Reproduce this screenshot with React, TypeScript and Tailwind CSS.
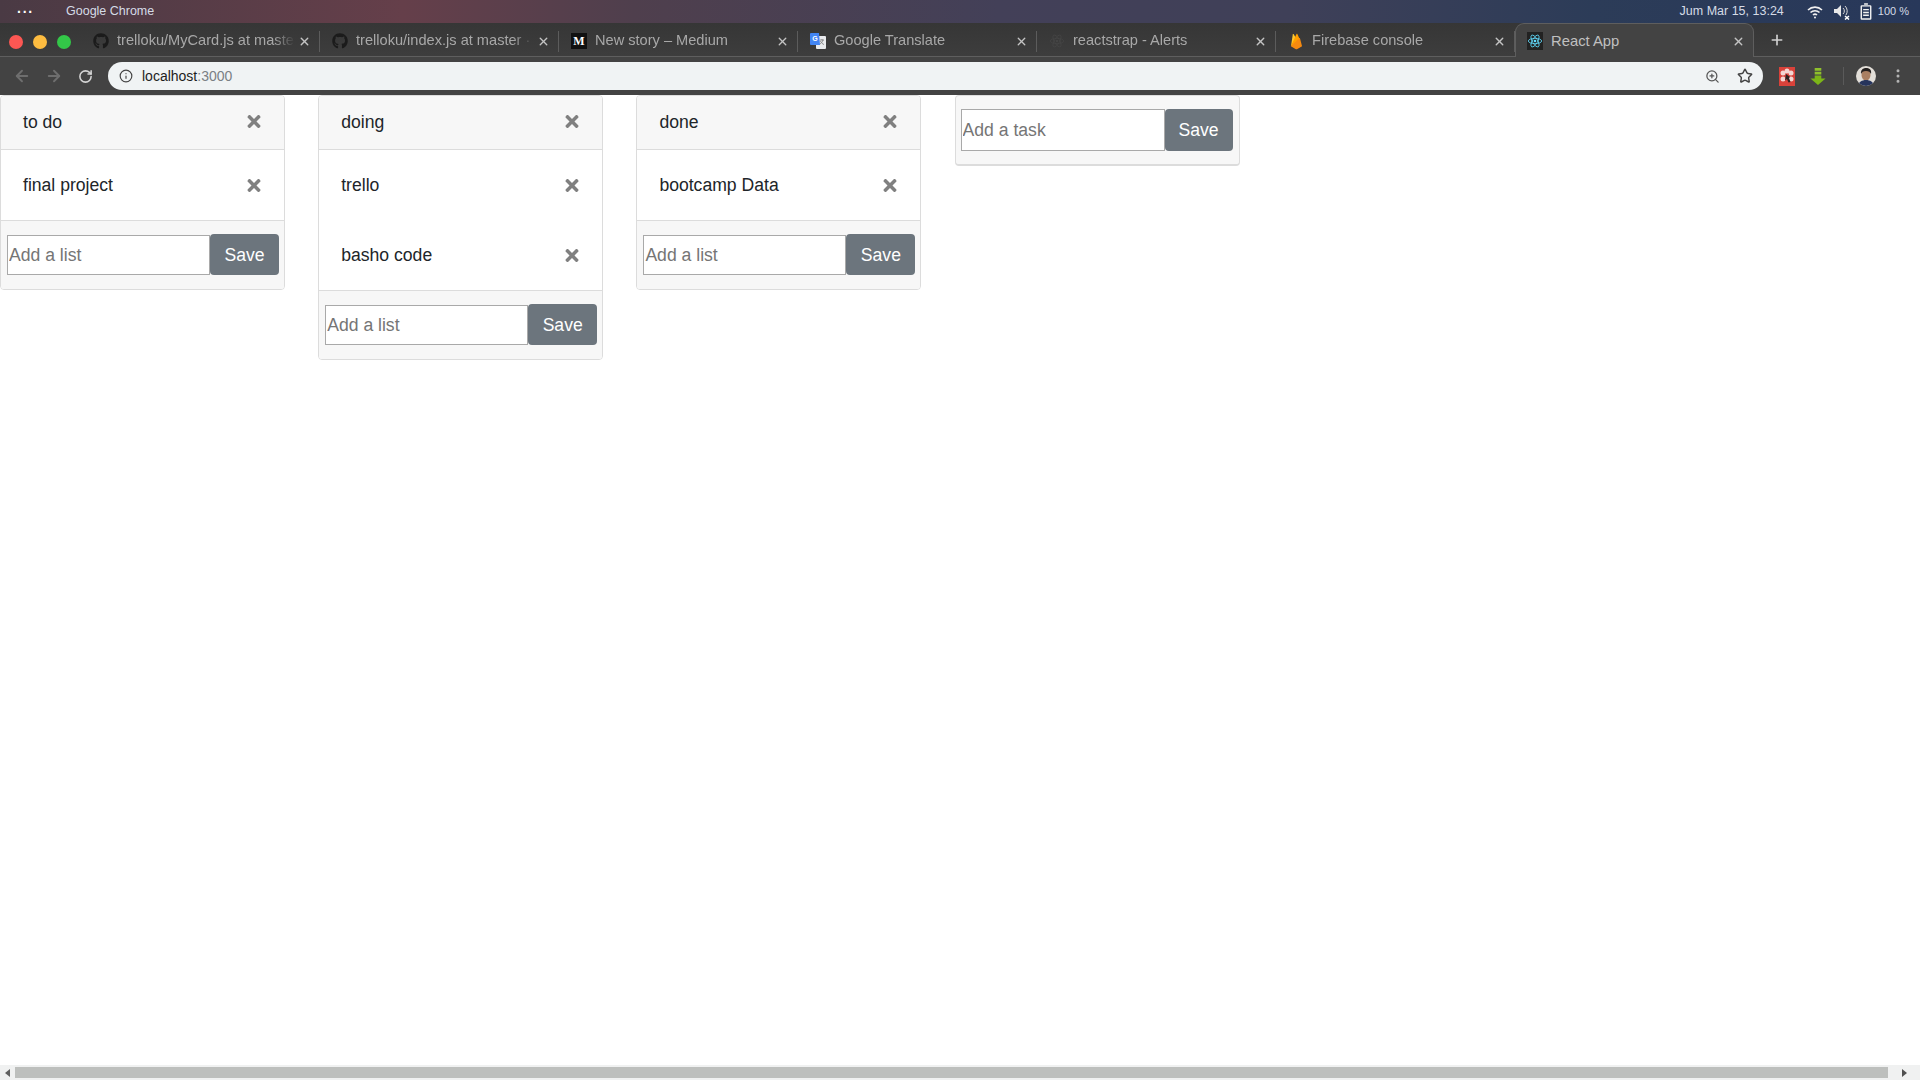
import { ArrowLeft, ArrowRight, Info, MoreVertical, Plus, RotateCw, Star, X, ZoomIn } from 'lucide-react';
import { FaGithub, FaTimes } from 'react-icons/fa';

function ReactLogo({ className }: { className: string }) {
  return (
    <svg viewBox="0 0 24 24" fill="none" stroke="currentColor" strokeWidth="1.2" className={className}>
      <circle cx="12" cy="12" r="2" fill="currentColor" stroke="none" />
      <ellipse cx="12" cy="12" rx="10" ry="4" />
      <ellipse cx="12" cy="12" rx="10" ry="4" transform="rotate(60 12 12)" />
      <ellipse cx="12" cy="12" rx="10" ry="4" transform="rotate(120 12 12)" />
    </svg>
  );
}

function MediumIcon() {
  return (
    <span className="flex h-4 w-4 items-center justify-center bg-[#111] font-['Liberation_Serif',serif] text-[12px] font-bold leading-none text-white">
      M
    </span>
  );
}

function TranslateIcon() {
  return (
    <svg viewBox="0 0 16 16" className="h-4 w-4">
      <rect x="6" y="3" width="10" height="13" rx="1" fill="#e8eaed" />
      <path d="M10 7h4M12 6v1M13 7c-.5 2-2 3.5-3 4M10.500 8c.5 1.500 2 3 3.500 3.500" stroke="#777" strokeWidth="0.8" fill="none" />
      <path d="M1 0h8l1 12H1a1 1 0 0 1-1-1V1a1 1 0 0 1 1-1z" fill="#4285f4" />
      <text x="2.200" y="8" fontSize="7" fontWeight="700" fill="#fff" fontFamily="Liberation Sans, sans-serif">G</text>
    </svg>
  );
}

function FirebaseIcon() {
  return (
    <svg viewBox="0 0 14 18" className="h-[17px] w-[13px]">
      <path d="M1 14 3 1.500c.1-.5.7-.6 1-.2l2.500 4.200z" fill="#ffc62b" />
      <path d="M1 14 7 1c.2-.4.7-.4.9 0L10 5.500l1 5z" fill="#ffa000" />
      <path d="M1 14 9.800 5.500c.3-.3.8-.2 1 .2L13 14l-5.500 3.300a1.500 1.500 0 0 1-1.200 0z" fill="#f68a10" />
    </svg>
  );
}

function RedExtension() {
  return (
    <svg viewBox="0 0 16 19" className="h-[19px] w-[16px]">
      <rect width="16" height="19" fill="#d9423a" />
      <g fill="#f3d6d2">
        <circle cx="4" cy="6" r="2.500" />
        <circle cx="8" cy="4" r="2.500" />
        <circle cx="12" cy="6" r="2.500" />
        <circle cx="4" cy="12" r="2.500" />
        <circle cx="12" cy="12" r="2.500" />
      </g>
      <path d="M7 7l4 3-1 1 1.500 4-2 .5L8 12l-2 1.500z" fill="#2a2322" />
    </svg>
  );
}

function Avatar() {
  return (
    <svg viewBox="0 0 20 20" className="h-[20px] w-[20px] rounded-full">
      <rect width="20" height="20" fill="#e2ded8" />
      <ellipse cx="10" cy="9" rx="4.500" ry="5.500" fill="#a97f62" />
      <path d="M5 8c-.5-4 2-6 5-6s6 1.500 5 6c-1-2-2-3-5-3S6 6 5 8z" fill="#231f1e" />
      <path d="M2 20c.5-4 4-6 8-6s7.500 2 8 6z" fill="#26345c" />
    </svg>
  );
}

const tabs = [
  { title: 'trelloku/MyCard.js at maste', icon: <FaGithub className="h-4 w-4 text-[#1b1b1b]" /> },
  { title: 'trelloku/index.js at master ·', icon: <FaGithub className="h-4 w-4 text-[#1b1b1b]" /> },
  { title: 'New story – Medium', icon: <MediumIcon /> },
  { title: 'Google Translate', icon: <TranslateIcon /> },
  { title: 'reactstrap - Alerts', icon: <ReactLogo className="h-4 w-4 text-[#444]" /> },
  { title: 'Firebase console', icon: <FirebaseIcon /> },
];

function Tab({ title, icon }: { title: string; icon: React.ReactNode }) {
  return (
    <div className="flex h-full w-[239px] shrink-0 items-center pl-[12px] pt-[3px]">
      <div className="flex w-4 shrink-0 justify-center">{icon}</div>
      <span className="ml-[8px] min-w-0 flex-1 overflow-hidden whitespace-nowrap text-[14.600px] text-[#a8a8a8] [mask-image:linear-gradient(to_right,black_88%,transparent)]">
        {title}
      </span>
      <X className="ml-[3px] h-[13px] w-[13px] shrink-0 text-[#c4c4c4]" strokeWidth={2.5} />
      <div className="ml-[8px] h-[21px] w-px shrink-0 bg-[#5c5c5c]" />
    </div>
  );
}

function TopBar() {
  return (
    <div className="flex h-[23px] shrink-0 items-center bg-[linear-gradient(to_right,#4a3a44,#653f4a_21%,#4f3f4d_33%,#434058_52%,#3f4058_67%,#2c3c58_83%,#28385a)] text-[12.500px] text-[#d5dbe6]">
      <span className="ml-[17px] w-[49px] text-[14px] font-bold leading-none tracking-[1px] text-white">···</span>
      <span>Google Chrome</span>
      <span className="ml-auto">Jum Mar 15, 13:24</span>
      <svg viewBox="0 0 16 14" className="ml-[23px] h-[14px] w-[16px]" fill="none" stroke="#f0f0f0" strokeWidth="1.600">
        <path d="M1 5a10 10 0 0 1 14 0M3.500 7.500a6.500 6.500 0 0 1 9 0M6 10a3 3 0 0 1 4 0" />
        <circle cx="8" cy="12.500" r="1" fill="#f0f0f0" stroke="none" />
      </svg>
      <svg viewBox="0 0 18 16" className="ml-[10px] h-[16px] w-[18px]" fill="none" stroke="#d8d8d8" strokeWidth="1">
        <path d="M1 5h3l4-4v12l-4-4H1z" fill="#e8e8e8" stroke="none" />
        <path d="M10 4a4 4 0 0 1 0 6M12 2a7 7 0 0 1 1 9" />
        <path d="M12 12l4 3.500M16 12l-4 3.500" stroke="#fff" strokeWidth="1.500" />
      </svg>
      <svg viewBox="0 0 12 18" className="ml-[9px] h-[17px] w-[12px]" fill="none" stroke="#f0f0f0" strokeWidth="1.500">
        <rect x="1" y="3" width="10" height="14" rx="0.500" />
        <path d="M4 1h4M3 7h6M3 10h6M3 13h6" />
      </svg>
      <span className="ml-[6px] mr-[11px] text-[11px]">100 %</span>
    </div>
  );
}

function TabStrip() {
  return (
    <div className="flex h-[34px] shrink-0 items-stretch border-b border-[#5e5e5e] bg-[linear-gradient(#363636,#3d3d3d)]">
      <div className="flex w-[81px] shrink-0 items-center gap-[10px] pl-[9px] pt-[5px]">
        <span className="h-[14px] w-[14px] rounded-full bg-[#fc5753]" />
        <span className="h-[14px] w-[14px] rounded-full bg-[#fdbc40]" />
        <span className="h-[14px] w-[14px] rounded-full bg-[#33c748]" />
      </div>
      {tabs.map((t) => (
        <Tab key={t.title} title={t.title} icon={t.icon} />
      ))}
      <div className="-mb-px flex w-[239px] shrink-0 items-center rounded-t-[9px] border border-b-0 border-[#5e5e5e] bg-[#434343] pl-[11px] pr-[8px] pt-[1px]">
        <span className="flex h-[18px] w-[16px] items-center justify-center bg-[#222]">
          <ReactLogo className="h-4 w-4 text-[#61dafb]" />
        </span>
        <span className="ml-[8px] flex-1 text-[14.800px] text-[#c0c0c0]">React App</span>
        <X className="h-[13px] w-[13px] text-[#c4c4c4]" strokeWidth={2.5} />
      </div>
      <Plus className="ml-[15px] h-[16px] w-[16px] self-center text-[#d0d0d0]" strokeWidth={2.5} />
    </div>
  );
}

function Toolbar() {
  return (
    <div className="flex h-[38px] shrink-0 items-start bg-[#434343] pt-[5px]">
      <div className="flex h-[28px] w-[108px] items-center pl-[13px]">
        <ArrowLeft className="h-[18px] w-[18px] text-[#6e6e6e]" strokeWidth={2.5} />
        <ArrowRight className="ml-[14px] h-[18px] w-[18px] text-[#6e6e6e]" strokeWidth={2.5} />
        <RotateCw className="ml-[15px] h-[15px] w-[15px] text-[#d4d4d4]" strokeWidth={2.5} />
      </div>
      <div className="flex h-[28px] w-[1655px] shrink-0 items-center rounded-full bg-[#f0f3f4] pl-[11px] pr-[10px]">
        <Info className="h-[14px] w-[14px] text-[#444]" />
        <span className="ml-[9px] text-[14px] text-[#1d1d1d]">
          localhost<span className="text-[#7a7f84]">:3000</span>
        </span>
        <ZoomIn className="ml-auto h-[15px] w-[15px] text-[#555]" />
        <Star className="ml-[17px] h-[16px] w-[16px] text-[#444]" strokeWidth={2.2} />
      </div>
      <div className="flex h-[28px] items-center">
        <span className="ml-[16px] flex">
          <RedExtension />
        </span>
        <svg viewBox="0 0 16 18" className="ml-[15px] h-[17px] w-[16px]">
          <path d="M4.500 0h7v3h-7zM4.500 4h7v3h-7z" fill="#8fc02c" />
          <path d="M4.500 8h7v3H16l-8 7-8-7h4.500z" fill="#7cb518" />
        </svg>
        <div className="ml-[17px] h-[18px] w-px bg-[#5a5a5a]" />
        <span className="ml-[12px] flex">
          <Avatar />
        </span>
        <MoreVertical className="ml-[13px] h-[18px] w-[18px] text-[#b4b4b4]" />
      </div>
    </div>
  );
}

function AddForm({ placeholder, inputWidth, tall }: { placeholder: string; inputWidth: string; tall?: boolean }) {
  return (
    <div className="flex items-center">
      <input
        readOnly
        placeholder={placeholder}
        className={`${inputWidth} ${tall ? 'h-[42px]' : 'h-[40px] pt-[2px]'} border border-[#a9a9a9] bg-white px-[1px] text-[17.600px] text-[#212529] outline-none placeholder:text-[#757575]`}
      />
      <button className={`${tall ? 'h-[42px]' : 'h-[41px]'} flex-1 rounded-[4px] bg-[#6c757d] text-[17.600px] text-white`}>Save</button>
    </div>
  );
}

function Row({ text, header }: { text: string; header?: boolean }) {
  return (
    <div className={`flex items-center justify-between pl-[22px] pr-[23px] ${header ? 'h-[53px] pb-[2px]' : 'h-[70px]'}`}>
      <span>{text}</span>
      <FaTimes className="h-[19px] w-[14px] text-[#808080]" />
    </div>
  );
}

function ListCard({ title, items }: { title: string; items: string[] }) {
  return (
    <div className="w-[285px] shrink-0 self-start overflow-hidden rounded-[4px] border border-[#dcdcdc]">
      <div className="border-b border-[#dcdcdc] bg-[#f7f7f7]">
        <Row text={title} header />
      </div>
      <div className="bg-white">
        {items.map((item) => (
          <Row key={item} text={item} />
        ))}
      </div>
      <div className="border-t border-[#dcdcdc] bg-[#f7f7f7] pb-[14px] pl-[6px] pr-[5px] pt-[13px]">
        <AddForm placeholder="Add a list" inputWidth="w-[203px]" />
      </div>
    </div>
  );
}

function Scrollbar() {
  return (
    <div className="flex h-[15px] shrink-0 items-center bg-[#f0f1f1]">
      <div className="flex w-[15px] justify-center">
        <span className="h-0 w-0 border-y-[4px] border-r-[5px] border-y-transparent border-r-[#606060]" />
      </div>
      <div className="h-[11px] w-[1873px] bg-[#bdbfbd]" />
      <div className="flex flex-1 justify-center">
        <span className="h-0 w-0 border-y-[4px] border-l-[5px] border-y-transparent border-l-[#505050]" />
      </div>
    </div>
  );
}

export default function App() {
  return (
    <div className="flex h-screen flex-col overflow-hidden bg-white font-['Liberation_Sans',Arial,sans-serif]">
      <TopBar />
      <TabStrip />
      <Toolbar />
      <div className="flex min-h-0 flex-1 items-start gap-[33.200px] text-[17.600px] leading-[26px] text-[#212529]">
        <ListCard title="to do" items={['final project']} />
        <ListCard title="doing" items={['trello', 'basho code']} />
        <ListCard title="done" items={['bootcamp Data']} />
        <div className="w-[285px] shrink-0 rounded-[4px] border border-b-2 border-[#dcdcdc] bg-[#f7f7f7] pb-[13px] pl-[5px] pr-[6px] pt-[13px]">
          <AddForm placeholder="Add a task" inputWidth="w-[204px]" tall />
        </div>
      </div>
      <Scrollbar />
    </div>
  );
}
